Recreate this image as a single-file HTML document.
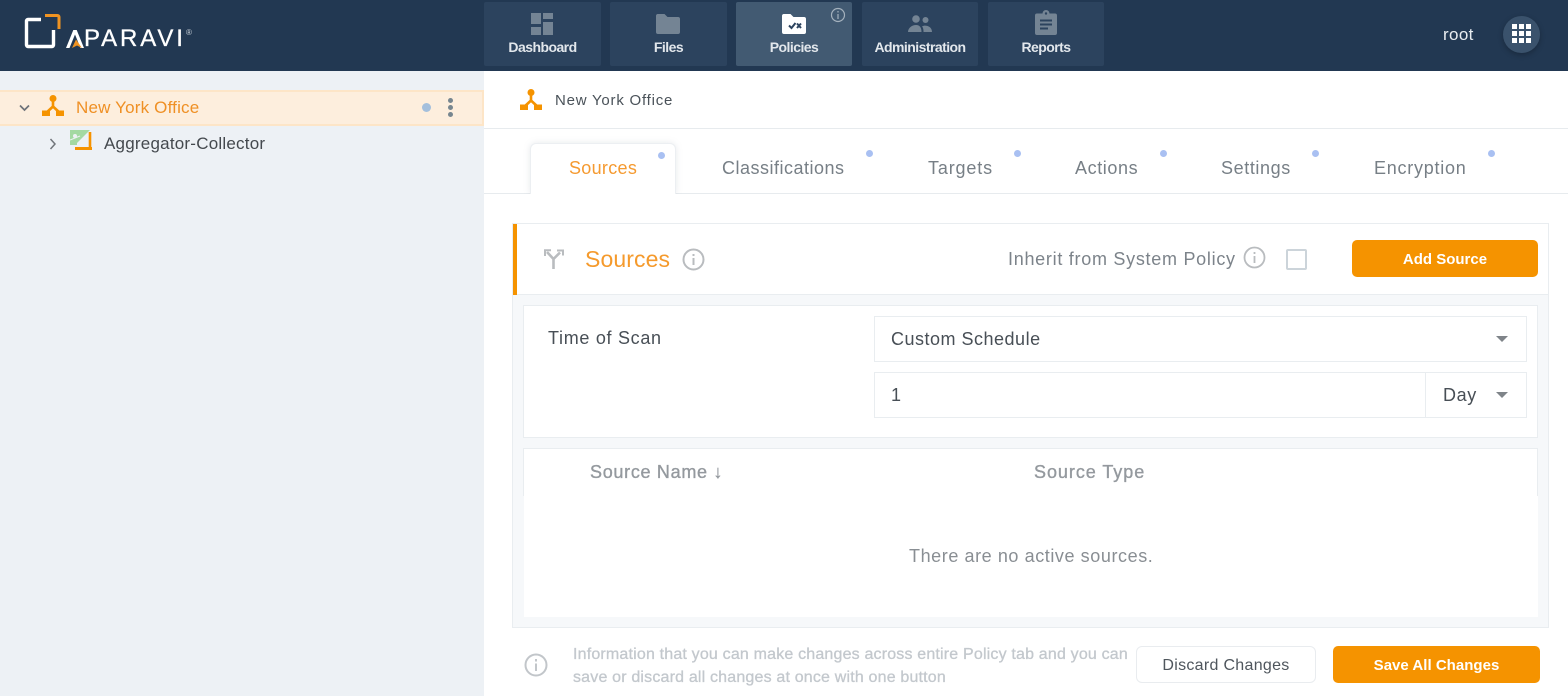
<!DOCTYPE html>
<html lang="en">
<head>
<meta charset="utf-8">
<title>Aparavi Policies</title>
<style>
html,body{margin:0;padding:0}
body{position:relative;width:1568px;height:696px;overflow:hidden;background:#fff;font-family:"Liberation Sans",sans-serif}
.a,.t{position:absolute}
.t{white-space:nowrap;line-height:1}
svg{position:absolute;display:block}
.nav{position:absolute;top:2px;width:117px;height:64px;background:#2c435e;border-radius:2px}
.nav .t{left:0;width:100%;text-align:center;top:38px;font-size:14px;font-weight:700;color:#e2e7ec;letter-spacing:-.55px}
.dot{position:absolute;width:7px;height:7px;border-radius:50%;background:#a9c0f2}
.tab{font-size:18px;color:#777f86;top:159px;letter-spacing:.5px}
</style>
</head>
<body>
<div class="a" style="left:0;top:0;width:1568px;height:71px;background:#223852"></div>
<svg style="left:24px;top:14px" width="172" height="36" viewBox="0 0 172 36">
<path d="M17 5.500H4A1.500 1.500 0 0 0 2.500 7V31A1.500 1.500 0 0 0 4 32.500H28A1.500 1.500 0 0 0 29.500 31V16" fill="none" stroke="#fff" stroke-width="3.400"/>
<path d="M21 1.500H33.500A1.500 1.500 0 0 1 35 3V15" fill="none" stroke="#ef9322" stroke-width="3"/>
<path d="M42 34 49.300 16H52.700L60 34H56.500L51 20.500 45.500 34Z" fill="#fff"/>
<path d="M48 34 52 25.500 58 34 53 31.500Z" fill="#ef9322"/>
</svg>
<div class="t" style="left:84px;top:27px;font-size:24px;color:#fff;letter-spacing:2.9px;-webkit-text-stroke:.3px #fff">PARAVI</div>
<div class="t" style="left:186px;top:29px;font-size:8px;color:#cfd6dd">®</div>

<div class="nav" style="left:484px"><div class="t">Dashboard</div></div>
<div class="nav" style="left:610px"><div class="t">Files</div></div>
<div class="nav" style="left:736px;width:116px;background:#425a72"><div class="t">Policies</div></div>
<div class="nav" style="left:862px;width:116px"><div class="t">Administration</div></div>
<div class="nav" style="left:988px;width:116px"><div class="t">Reports</div></div>
<svg style="left:530px;top:12px" width="24" height="24" viewBox="0 0 24 24" fill="#748494"><rect x="1" y="1" width="10" height="11"/><rect x="13" y="1" width="10" height="6"/><rect x="13" y="10" width="10" height="13"/><rect x="1" y="15" width="10" height="8"/></svg>
<svg style="left:655px;top:13px" width="26" height="22" viewBox="0 0 26 22"><path d="M2.500 1H9.500L12.500 4H23A2 2 0 0 1 25 6V19A2 2 0 0 1 23 21H3A2 2 0 0 1 1 19V3A2 2 0 0 1 2.500 1Z" fill="#748494"/></svg>
<svg style="left:781px;top:13px" width="26" height="22" viewBox="0 0 26 22"><path d="M2.500 1H9.500L12.500 4H23A2 2 0 0 1 25 6V19A2 2 0 0 1 23 21H3A2 2 0 0 1 1 19V3A2 2 0 0 1 2.500 1Z" fill="#fff"/><path d="M8 12.500 10.500 15 14.500 10" fill="none" stroke="#2c435e" stroke-width="2"/><path d="M16 10.500 20 15M20 10.500 16 15" fill="none" stroke="#2c435e" stroke-width="2"/></svg>
<svg style="left:830px;top:7px" width="16" height="16" viewBox="0 0 16 16" fill="none" stroke="#a4b1bd" stroke-width="1.200"><circle cx="8" cy="8" r="6.500"/><path d="M8 7V12M8 4V5.500"/></svg>
<svg style="left:907px;top:14px" width="26" height="20" viewBox="0 0 26 20" fill="#748494"><circle cx="9" cy="5" r="3.800"/><circle cx="18.500" cy="6" r="3"/><path d="M1 18C1 14 5 11 9 11S14.500 14 14.500 18Z"/><path d="M16.500 18C16.500 15 16 13.500 15 12.500 18 10.500 25 12 25 18Z"/></svg>
<svg style="left:1034px;top:10px" width="24" height="26" viewBox="0 0 24 26"><path d="M3 3.500H8.500A3.500 3.500 0 0 1 15.500 3.500H21A2 2 0 0 1 23 5.500V23A2 2 0 0 1 21 25H3A2 2 0 0 1 1 23V5.500A2 2 0 0 1 3 3.500Z" fill="#748494"/><path d="M6 10.500H18M6 14.500H18M6 18.500H14" stroke="#2c435e" stroke-width="2"/><circle cx="12" cy="3.500" r="1.200" fill="#2c435e"/></svg>

<div class="t" style="left:1443px;top:26px;font-size:17px;color:#e8ecf0;letter-spacing:.35px">root</div>
<div class="a" style="left:1503px;top:16px;width:37px;height:37px;border-radius:50%;background:#3a526c;box-shadow:0 2px 6px rgba(0,0,0,.25)"></div>
<svg style="left:1512px;top:24px" width="19" height="20" fill="#fff"><rect x="0" y="0" width="5" height="5"/><rect x="7" y="0" width="5" height="5"/><rect x="14" y="0" width="5" height="5"/><rect x="0" y="7" width="5" height="5"/><rect x="7" y="7" width="5" height="5"/><rect x="14" y="7" width="5" height="5"/><rect x="0" y="14" width="5" height="5"/><rect x="7" y="14" width="5" height="5"/><rect x="14" y="14" width="5" height="5"/></svg>

<div class="a" style="left:0;top:71px;width:484px;height:625px;background:#edf1f5"></div>
<div class="a" style="left:0;top:90px;width:484px;height:36px;box-sizing:border-box;background:#fdeedd;border:2px solid #fde5c7;border-left:0"></div>
<svg style="left:19px;top:104px" width="11" height="8" fill="none" stroke="#6d7278" stroke-width="1.700"><path d="M1 1.500 5.500 6 10 1.500"/></svg>
<svg style="left:42px;top:95px" width="22" height="22" viewBox="0 0 22 22" fill="#f59300"><circle cx="11" cy="3.500" r="3.500"/><rect x="0" y="15.500" width="8" height="5.500"/><rect x="14" y="15.500" width="8" height="5.500"/><path d="M11 6V11.500L4 18M11 11.500 18 18" fill="none" stroke="#f59300" stroke-width="2.600"/></svg>
<div class="t" style="left:76px;top:99px;font-size:17px;color:#ef9025;letter-spacing:.18px">New York Office</div>
<div class="a" style="left:422px;top:103px;width:9px;height:9px;border-radius:50%;background:#a4bfdc"></div>
<div class="a" style="left:448px;top:98px;width:5px;height:5px;border-radius:50%;background:#77868f"></div>
<div class="a" style="left:448px;top:105px;width:5px;height:5px;border-radius:50%;background:#77868f"></div>
<div class="a" style="left:448px;top:112px;width:5px;height:5px;border-radius:50%;background:#77868f"></div>
<svg style="left:49px;top:138px" width="8" height="12" fill="none" stroke="#71767b" stroke-width="1.500"><path d="M1.500 1 6 6 1.500 11"/></svg>
<svg style="left:70px;top:130px" width="22" height="21" viewBox="0 0 22 21"><path d="M0 0H20L7 13V15H0Z" fill="#a3d9a2"/><circle cx="5" cy="6" r="2" fill="#edf1f5"/><path d="M0 10 10 6" stroke="#edf1f5" stroke-width="1"/><path d="M20 2V17" stroke="#f59300" stroke-width="2.600" fill="none"/><path d="M13 17H22V20H5V17Z" fill="#f59300"/></svg>
<div class="t" style="left:104px;top:135px;font-size:17px;color:#44494e;letter-spacing:.22px">Aggregator-Collector</div>

<div class="a" style="left:484px;top:128px;width:1084px;height:1px;background:#e7ebee"></div>
<svg style="left:520px;top:89px" width="22" height="22" viewBox="0 0 22 22" fill="#f59300"><circle cx="11" cy="3.500" r="3.500"/><rect x="0" y="15.500" width="8" height="5.500"/><rect x="14" y="15.500" width="8" height="5.500"/><path d="M11 6V11.500L4 18M11 11.500 18 18" fill="none" stroke="#f59300" stroke-width="2.600"/></svg>
<div class="t" style="left:555px;top:93px;font-size:15px;color:#4a5259;letter-spacing:.78px">New York Office</div>

<div class="a" style="left:484px;top:193px;width:1084px;height:1px;background:#e7ebee"></div>
<div class="a" style="left:530px;top:143px;width:146px;height:51px;box-sizing:border-box;background:#fff;border:1px solid #eceff2;border-bottom:0;border-radius:6px 6px 0 0;box-shadow:0 0 7px rgba(120,135,150,.18);clip-path:inset(-8px -8px 0 -8px)"></div>
<div class="t tab" style="left:569px;color:#f59a30;letter-spacing:.3px">Sources</div>
<div class="t tab" style="left:722px">Classifications</div>
<div class="t tab" style="left:928px;letter-spacing:.85px">Targets</div>
<div class="t tab" style="left:1075px;letter-spacing:.6px">Actions</div>
<div class="t tab" style="left:1221px;letter-spacing:.6px">Settings</div>
<div class="t tab" style="left:1374px;letter-spacing:.75px">Encryption</div>
<div class="dot" style="left:658px;top:152px"></div>
<div class="dot" style="left:866px;top:150px"></div>
<div class="dot" style="left:1014px;top:150px"></div>
<div class="dot" style="left:1160px;top:150px"></div>
<div class="dot" style="left:1312px;top:150px"></div>
<div class="dot" style="left:1488px;top:150px"></div>

<div class="a" style="left:512px;top:223px;width:1037px;height:405px;box-sizing:border-box;background:#f6f8fa;border:1px solid #e9edf0"></div>
<div class="a" style="left:513px;top:224px;width:1035px;height:71px;background:#fff;border-bottom:1px solid #e9edf0;box-sizing:border-box"></div>
<div class="a" style="left:513px;top:224px;width:4px;height:71px;background:#f59300"></div>
<svg style="left:544px;top:249px" width="21" height="20" viewBox="0 0 21 20" fill="none" stroke="#b9bcbf" stroke-width="2.600"><path d="M9.500 20V10L3 3M9.500 10 16 3.500"/><path d="M1 7V1.200H7M13 1.500H19V6.500" stroke-width="2"/></svg>
<div class="t" style="left:585px;top:248px;font-size:23px;color:#f59a2c;letter-spacing:.1px">Sources</div>
<svg style="left:682px;top:248px" width="23" height="23" viewBox="0 0 23 23" fill="none" stroke="#b9bcbf" stroke-width="2"><circle cx="11.500" cy="11.500" r="10"/><path d="M11.500 10V17M11.500 6V8"/></svg>
<div class="t" style="left:1008px;top:250px;font-size:18px;color:#7c838a;letter-spacing:.72px">Inherit from System Policy</div>
<svg style="left:1243px;top:246px" width="23" height="23" viewBox="0 0 23 23" fill="none" stroke="#b9bcbf" stroke-width="1.800"><circle cx="11.500" cy="11.500" r="10"/><path d="M11.500 10V17M11.500 6V8"/></svg>
<div class="a" style="left:1286px;top:249px;width:21px;height:21px;box-sizing:border-box;border:2px solid #ccd4da;border-radius:2px"></div>
<div class="a" style="left:1352px;top:240px;width:186px;height:37px;border-radius:5px;background:#f59300"></div>
<div class="t" style="left:1352px;top:252px;width:186px;text-align:center;font-size:15px;font-weight:700;color:#fff">Add Source</div>

<div class="a" style="left:523px;top:305px;width:1015px;height:133px;box-sizing:border-box;background:#fff;border:1px solid #e9edf0"></div>
<div class="t" style="left:548px;top:329px;font-size:18px;color:#484f56;letter-spacing:.7px">Time of Scan</div>
<div class="a" style="left:874px;top:316px;width:653px;height:46px;box-sizing:border-box;background:#fff;border:1px solid #e9edf0"></div>
<div class="t" style="left:891px;top:330px;font-size:18px;color:#484f56;letter-spacing:.5px">Custom Schedule</div>
<div class="a" style="left:1496px;top:336px;width:0;height:0;border-left:6px solid transparent;border-right:6px solid transparent;border-top:6px solid #7f8489"></div>
<div class="a" style="left:874px;top:372px;width:653px;height:46px;box-sizing:border-box;background:#fff;border:1px solid #e9edf0"></div>
<div class="a" style="left:1425px;top:373px;width:1px;height:44px;background:#e9edf0"></div>
<div class="t" style="left:891px;top:386px;font-size:18px;color:#484f56">1</div>
<div class="t" style="left:1443px;top:386px;font-size:18px;color:#484f56;letter-spacing:.6px">Day</div>
<div class="a" style="left:1496px;top:392px;width:0;height:0;border-left:6px solid transparent;border-right:6px solid transparent;border-top:6px solid #7f8489"></div>

<div class="a" style="left:523px;top:448px;width:1015px;height:48px;box-sizing:border-box;background:#fff;border:1px solid #e9edf0;border-bottom:0"></div>
<div class="a" style="left:524px;top:496px;width:1014px;height:121px;background:#fff"></div>
<div class="t" style="left:590px;top:463px;font-size:18px;color:#94999e;letter-spacing:.7px;-webkit-text-stroke:.35px #94999e">Source Name ↓</div>
<div class="t" style="left:1034px;top:463px;font-size:18px;color:#94999e;letter-spacing:.95px;-webkit-text-stroke:.35px #94999e">Source Type</div>
<div class="t" style="left:909px;top:547px;font-size:18px;color:#898e93;letter-spacing:.58px">There are no active sources.</div>

<svg style="left:524px;top:653px" width="24" height="24" viewBox="0 0 24 24" fill="none" stroke="#c2c6ca" stroke-width="2"><circle cx="12" cy="12" r="10.500"/><path d="M12 10.500V18M12 6V8.500"/></svg>
<div class="t" style="left:573px;top:643px;font-size:16px;line-height:23px;color:#c3c8cd;letter-spacing:.18px;-webkit-text-stroke:.3px #c3c8cd">Information that you can make changes across entire Policy tab and you can<br>save or discard all changes at once with one button</div>
<div class="a" style="left:1136px;top:646px;width:180px;height:37px;box-sizing:border-box;background:#fff;border:1px solid #e9ecef;border-radius:6px"></div>
<div class="t" style="left:1136px;top:658px;width:180px;text-align:center;font-size:16px;color:#4f565d;letter-spacing:.3px">Discard Changes</div>
<div class="a" style="left:1333px;top:646px;width:207px;height:37px;border-radius:5px;background:#f59300"></div>
<div class="t" style="left:1333px;top:658px;width:207px;text-align:center;font-size:15px;font-weight:700;color:#fff;letter-spacing:.02px">Save All Changes</div>
</body>
</html>
